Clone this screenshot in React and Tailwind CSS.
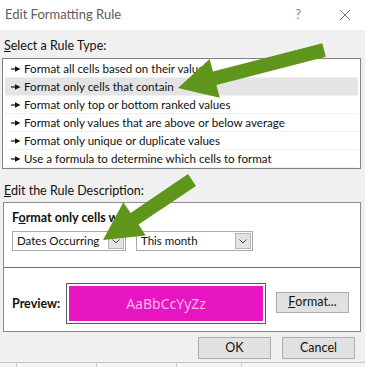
import React from 'react'

const font = { fontFamily: 'Lato, "Noto Sans", Arial, sans-serif' }

const rules = [
  'Format all cells based on their values',
  'Format only cells that contain',
  'Format only top or bottom ranked values',
  'Format only values that are above or below average',
  'Format only unique or duplicate values',
  'Use a formula to determine which cells to format',
]

const Bullet = () => (
  <svg width="10" height="8" viewBox="0 0 10 8" className="shrink-0">
    <path d="M0 4h5" stroke="#111" strokeWidth="1.2" />
    <path d="M4 1.2L9.5 4 4 6.8z" fill="#111" />
  </svg>
)

const Chevron = () => (
  <svg width="8" height="5" viewBox="0 0 8 5">
    <path d="M0.5 0.5L4 4 7.5 0.5" fill="none" stroke="#444" strokeWidth="1" />
  </svg>
)

const Dropdown = ({ label, width }) => (
  <div className={`flex items-center h-[20px] bg-white border border-[#a9a9a9] ${width}`}>
    <span className="flex-1 pl-[4px] text-[11.5px] text-[#111] leading-none">{label}</span>
    <div className="w-[16px] h-[16px] mr-[1px] bg-[#e3e3e3] border border-[#b5b5b5] flex items-center justify-center">
      <Chevron />
    </div>
  </div>
)

const Button = ({ children, className }) => (
  <div className={`h-[21px] bg-[#e1e1e1] border border-[#adadad] flex items-center justify-center text-[12.5px] text-[#111] ${className}`}>
    {children}
  </div>
)

const Arrows = () => (
  <svg className="absolute inset-0 pointer-events-none" width="365" height="367" viewBox="0 0 365 367">
    <polygon
      points="178,88 219.7,97.7 216.4,84.9 325.8,56.8 322.3,43.2 212.9,71.6 209.7,59.1"
      fill="#5f951b"
    />
    <polygon
      points="103,240 145.7,235.4 138.5,224.6 196,186 188,174 130.6,212.9 123.3,202.2"
      fill="#5f951b"
    />
  </svg>
)

export default function App() {
  return (
    <div className="relative w-[365px] h-[367px] bg-[#f0f0f0] overflow-hidden flex flex-col" style={font}>
      {/* title bar */}
      <div className="h-[30px] bg-white flex items-center pl-[5px] shrink-0">
        <span className="flex-1 text-[13px] text-[#5c5c5c]">Edit Formatting Rule</span>
        <span className="text-[13px] text-[#8a8a8a] mr-[38px]">?</span>
        <svg width="12" height="12" viewBox="0 0 12 12" className="mr-[14px]">
          <path d="M1 1L11 11M11 1L1 11" stroke="#777" strokeWidth="1" />
        </svg>
      </div>

      <div className="pt-[8px] pl-[4px] h-[16px] box-content text-[12.5px] text-[#111] leading-[16px]">
        <span className="underline">S</span>elect a Rule Type:
      </div>

      <div className="mt-[4px] ml-[2px] w-[359px] h-[111px] border border-[#828282] bg-white pt-[1px] px-[2px]">
        {rules.map((r, i) => (
          <div
            key={r}
            className={`h-[18px] flex items-center gap-[3px] pl-[6px] text-[11.6px] text-[#111] border-b border-[#f0f0f0] ${i === 1 ? 'bg-[#e4e4e6]' : ''}`}
          >
            <Bullet />
            <span>{r}</span>
          </div>
        ))}
      </div>

      <div className="mt-[14px] pl-[4px] h-[16px] text-[12.5px] text-[#111] leading-[16px]">
        <span className="underline">E</span>dit the Rule Description:
      </div>

      <div className="mt-[3px] ml-[3px] w-[358px] h-[130px] border border-[#8a8a8a] bg-white flex flex-col">
        <div className="h-[65px] border-b border-[#6e6e6e] px-[8px] pt-[7px]">
          <div className="text-[12.5px] font-bold text-[#111] leading-[16px]">
            F<span className="underline">o</span>rmat only cells with:
          </div>
          <div className="mt-[5px] flex gap-[10px]">
            <Dropdown label="Dates Occurring" width="w-[114px]" />
            <Dropdown label="This month" width="w-[117px]" />
          </div>
        </div>
        <div className="flex-1 flex items-start pt-[15px] pl-[8px]">
          <span className="w-[54px] mt-[12px] text-[12.5px] font-bold text-[#111]">Preview:</span>
          <div className="w-[200px] h-[41px] border border-[#5a5a5a] p-[2px]">
            <div className="w-full h-full bg-[#e815c3] flex items-center justify-center text-[14px] text-[#f5b4ea]" style={{ fontFamily: '"Noto Sans", sans-serif' }}>
              AaBbCcYyZz
            </div>
          </div>
          <Button className="ml-[10px] mt-[9px] w-[73px]">
            <span className="underline">F</span>ormat...
          </Button>
        </div>
      </div>

      <div className="mt-[5px] flex pl-[198px] gap-[11px]">
        <Button className="w-[73px] h-[22px]">OK</Button>
        <Button className="w-[73px] h-[22px]">Cancel</Button>
      </div>

      <div className="mt-auto h-[5px] border-t border-[#c6c6c6] bg-[#f5f5f5] flex">
        <div className="w-[17px] border-r border-[#c6c6c6]" />
        <div className="w-[80px] border-r border-[#c6c6c6]" />
        <div className="w-[80px] border-r border-[#c6c6c6]" />
        <div className="w-[65px] border-r border-[#c6c6c6]" />
      </div>

      <Arrows />
    </div>
  )
}
